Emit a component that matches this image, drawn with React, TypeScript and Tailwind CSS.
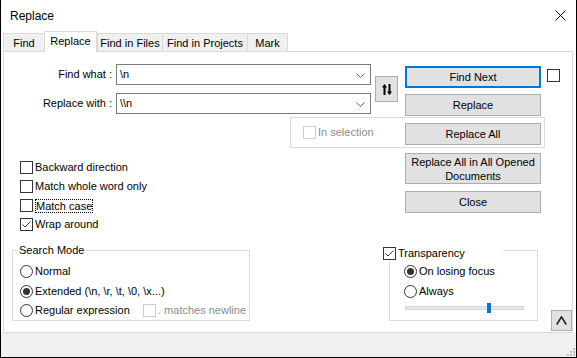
import React from 'react';

const font = "font-['Liberation_Sans',Arial,sans-serif]";

function Checkbox({ checked = false, disabled = false }: { checked?: boolean; disabled?: boolean }) {
  return (
    <span
      className={`flex h-[13px] w-[13px] shrink-0 items-center justify-center border bg-white ${
        disabled ? 'border-[#cccccc]' : 'border-[#333333]'
      }`}
    >
      {checked && (
        <svg width="11" height="11" viewBox="0 0 11 11">
          <polyline points="1.5,5.5 4,8 9.5,2.5" fill="none" stroke="#333333" strokeWidth="1" />
        </svg>
      )}
    </span>
  );
}

function Radio({ checked = false }: { checked?: boolean }) {
  return (
    <span className="flex h-[13px] w-[13px] shrink-0 items-center justify-center rounded-full border border-[#333333] bg-white">
      {checked && <span className="h-[7px] w-[7px] rounded-full bg-[#333333]" />}
    </span>
  );
}

function Combo({ label, value }: { label: string; value: string }) {
  return (
    <div className="flex h-[21px] items-center">
      <span className="w-[108px] text-right">{label}</span>
      <div className="relative ml-[4px] flex h-[21px] w-[255px] items-center border border-[#7a7a7a] bg-white pl-[3px]">
        {value}
        <svg className="absolute right-[5px] top-[8px]" width="9" height="5" viewBox="0 0 9 5">
          <polyline points="0.5,0.5 4.5,4.5 8.5,0.5" fill="none" stroke="#606060" strokeWidth="1" />
        </svg>
      </div>
    </div>
  );
}

function Btn({
  children,
  className = '',
  focused = false,
}: {
  children: React.ReactNode;
  className?: string;
  focused?: boolean;
}) {
  return (
    <div
      className={`flex w-[136px] items-center justify-center bg-[#e1e1e1] text-center leading-[14px] ${
        focused ? 'border-2 border-[#0078d7]' : 'border border-[#adadad]'
      } ${className}`}
    >
      {children}
    </div>
  );
}

export default function App() {
  const tabs = [
    { name: 'Find', w: 'w-[41px]' },
    { name: 'Replace', w: 'w-[53px]', active: true },
    { name: 'Find in Files', w: 'w-[65px]' },
    { name: 'Find in Projects', w: 'w-[85px]' },
    { name: 'Mark', w: 'w-[41px]', last: true },
  ];

  return (
    <div className={`${font} flex h-[358px] w-[577px] flex-col border-x border-b border-black bg-white text-[11px] text-black`}>
      {/* Title bar */}
      <div className="flex h-[31px] items-center justify-between pl-[9px] pr-[10px] text-[12px]">
        <span className="pt-[1px]">Replace</span>
        <svg width="11" height="11" viewBox="0 0 11 11">
          <path d="M0.5 0.5 L10.5 10.5 M10.5 0.5 L0.5 10.5" stroke="#000" strokeWidth="1" />
        </svg>
      </div>

      {/* Tabs */}
      <div className="relative z-10 -mb-px ml-[2px] flex h-[21px] items-start">
        {tabs.map((t) =>
          t.active ? (
            <div
              key={t.name}
              className={`${t.w} flex h-[21px] items-center justify-center border-x border-t border-[#d9d9d9] bg-white pb-[1px]`}
            >
              {t.name}
            </div>
          ) : (
            <div
              key={t.name}
              className={`${t.w} mt-[2px] flex h-[18px] items-center justify-center border-t border-l border-[#d9d9d9] bg-[#f0f0f0] pt-[1px] ${
                t.last ? 'border-r' : ''
              }`}
            >
              {t.name}
            </div>
          ),
        )}
      </div>

      {/* Panel */}
      <div className="relative ml-[2px] h-[282px] w-[570px] border border-[#d9d9d9] bg-white">
        <div className="flex h-[180px]">
          {/* Left column */}
          <div className="flex w-[394px] flex-col pt-[12px]">
            <div className="flex items-center">
              <div className="flex flex-col gap-[8px]">
                <Combo label="Find what :" value="\n" />
                <Combo label="Replace with :" value="\\n" />
              </div>
              <div className="ml-[4px] flex h-[26px] w-[23px] items-center justify-center border border-[#adadad] bg-[#e1e1e1]">
                <svg width="10" height="11" viewBox="0 0 10 11">
                  <path d="M2.5 11 V1.5" stroke="#000" strokeWidth="2" />
                  <polygon points="0,3.5 2.5,0 5,3.5" fill="#000" />
                  <path d="M7.5 0 V9.5" stroke="#000" strokeWidth="2" />
                  <polygon points="5,7.5 7.5,11 10,7.5" fill="#000" />
                </svg>
              </div>
            </div>

            <div className="mt-[47px] flex flex-col gap-[6px] pl-[16px]">
              <label className="flex h-[13px] items-center gap-[2px]">
                <Checkbox />
                <span>Backward direction</span>
              </label>
              <label className="flex h-[13px] items-center gap-[2px]">
                <Checkbox />
                <span>Match whole word only</span>
              </label>
              <label className="flex h-[13px] items-center gap-[2px]">
                <Checkbox />
                <span className="border border-dotted border-black leading-[12px]">Match case</span>
              </label>
              <label className="flex h-[13px] items-center gap-[2px]">
                <Checkbox checked />
                <span>Wrap around</span>
              </label>
            </div>
          </div>

          {/* Buttons */}
          <div className="ml-[7px] flex flex-col pt-[14px]">
            <Btn focused className="h-[22px]">
              Find Next
            </Btn>
            <Btn className="mt-[6px] h-[22px]">Replace</Btn>
            <Btn className="mt-[7px] h-[22px]">Replace All</Btn>
            <Btn className="mt-[8px] h-[31px] px-[4px]">Replace All in All Opened Documents</Btn>
            <Btn className="mt-[7px] h-[22px]">Close</Btn>
          </div>

          <div className="ml-[6px] pt-[17px]">
            <Checkbox />
          </div>
        </div>

        {/* In selection group, sits behind the buttons column */}
        <div className="absolute left-[286px] top-[65px] flex h-[31px] w-[255px] items-center border border-[#dcdcdc] pl-[12px] text-[#8c8c8c]">
          <Checkbox disabled />
          <span className="ml-[2px]">In selection</span>
        </div>

        {/* Bottom row */}
        <div className="flex h-[100px] items-start pt-[18px]">
          {/* Search mode */}
          <div className="relative ml-[8px] h-[71px] w-[238px] border border-[#dcdcdc] pl-[7px] pt-[14px]">
            <span className="absolute -top-[7px] left-[5px] bg-white px-[1px] leading-[13px]">Search Mode</span>
            <label className="flex h-[13px] items-center gap-[2px]">
              <Radio />
              <span>Normal</span>
            </label>
            <label className="mt-[7px] flex h-[13px] items-center gap-[2px]">
              <Radio checked />
              <span>Extended (\n, \r, \t, \0, \x...)</span>
            </label>
            <div className="mt-[6px] flex h-[13px] items-center">
              <label className="flex w-[123px] items-center gap-[2px]">
                <Radio />
                <span>Regular expression</span>
              </label>
              <Checkbox disabled />
              <span className="ml-[2px] text-[#8c8c8c]">. matches newline</span>
            </div>
          </div>

          {/* Transparency */}
          <div className="relative ml-[139px] h-[71px] w-[149px] border border-[#dcdcdc] pl-[14px] pt-[14px]">
            <label className="absolute -left-[7px] -top-[4px] flex h-[13px] w-[120px] items-center gap-[2px] bg-white">
              <Checkbox checked />
              <span>Transparency</span>
            </label>
            <label className="flex h-[13px] items-center gap-[2px]">
              <Radio checked />
              <span>On losing focus</span>
            </label>
            <label className="mt-[7px] flex h-[13px] items-center gap-[2px]">
              <Radio />
              <span>Always</span>
            </label>
            <div className="relative ml-[1px] mt-[5px] h-[10px] w-[119px]">
              <div className="absolute left-0 top-[3px] h-[4px] w-full border border-[#d6d6d6] bg-[#e7eaea]" />
              <div className="absolute left-[82px] top-0 h-[10px] w-[4px] bg-[#0078d7]" />
            </div>
          </div>

          <div className="mb-[1px] ml-[13px] flex h-[21px] w-[21px] items-center justify-center self-end border border-[#adadad] bg-[#e1e1e1]">
            <svg width="11" height="9" viewBox="0 0 11 9">
              <polyline points="0.8,8.5 5.5,0.8 10.2,8.5" fill="none" stroke="#1a1a3a" strokeWidth="1.5" />
            </svg>
          </div>
        </div>
      </div>

      {/* Bottom strip with size grip */}
      <div className="flex flex-1 items-end justify-end bg-[#f0f0f0] pb-[1px] pr-[1px]">
        <svg width="8" height="8" viewBox="0 0 8 8">
          <rect x="6" y="0" width="2" height="2" fill="#bcbcbc" />
          <rect x="3" y="3" width="2" height="2" fill="#bcbcbc" />
          <rect x="6" y="3" width="2" height="2" fill="#bcbcbc" />
          <rect x="0" y="6" width="2" height="2" fill="#bcbcbc" />
          <rect x="3" y="6" width="2" height="2" fill="#bcbcbc" />
          <rect x="6" y="6" width="2" height="2" fill="#bcbcbc" />
        </svg>
      </div>
    </div>
  );
}
